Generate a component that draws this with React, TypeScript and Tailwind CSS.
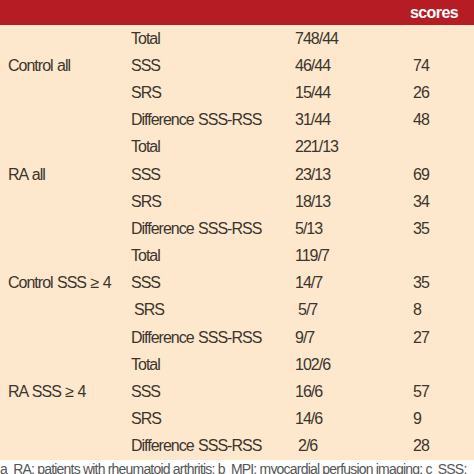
const groups = [
  {
    label: 'Control all',
    rows: [
      ['Total', '748/44', ''],
      ['SSS', '46/44', '74'],
      ['SRS', '15/44', '26'],
      ['Difference SSS-RSS', '31/44', '48'],
    ],
  },
  {
    label: 'RA all',
    rows: [
      ['Total', '221/13', ''],
      ['SSS', '23/13', '69'],
      ['SRS', '18/13', '34'],
      ['Difference SSS-RSS', '5/13', '35'],
    ],
  },
  {
    label: 'Control SSS ≥ 4',
    rows: [
      ['Total', '119/7', ''],
      ['SSS', '14/7', '35'],
      [' SRS', ' 5/7', '8'],
      ['Difference SSS-RSS', '9/7', '27'],
    ],
  },
  {
    label: 'RA SSS ≥ 4',
    rows: [
      ['Total', '102/6', ''],
      ['SSS', '16/6', '57'],
      ['SRS', '14/6', '9'],
      ['Difference SSS-RSS', ' 2/6', '28'],
    ],
  },
];

// leading space in the source cells shows as a small indent
function Cell({ text }: { text: string }) {
  const indent = text.startsWith(' ');
  return <span className={indent ? 'pl-[3px]' : ''}>{text.trim()}</span>;
}

export default function App() {
  return (
    <div
      className="h-[474px] w-[474px] overflow-hidden bg-white text-[16px] tracking-[-1px] text-[#3b352d] [word-spacing:1px]"
      style={{ fontFamily: '"Liberation Sans", Arial, sans-serif' }}
    >
      <div className="flex h-[25px] items-center justify-end bg-[#b51c24] pr-[16px] font-bold tracking-[-0.6px] text-white">
        scores
      </div>
      <div className="bg-[#fde8cd] pl-2">
        {groups.map((g) =>
          g.rows.map((r, i) => (
            <div
              key={g.label + i}
              className="grid h-[27.2px] grid-cols-[123px_164px_118px_1fr] items-center"
            >
              <span>{i === 1 ? g.label : ''}</span>
              <Cell text={r[0]} />
              <Cell text={r[1]} />
              <span>{r[2]}</span>
            </div>
          )),
        )}
      </div>
      <p className="whitespace-pre pt-[1px] text-[14px] leading-[16px] tracking-[-0.8px] text-[#555] [word-spacing:0px]">
        a  RA: patients with rheumatoid arthritis; b  MPI: myocardial perfusion imaging; c  SSS:
      </p>
    </div>
  );
}
